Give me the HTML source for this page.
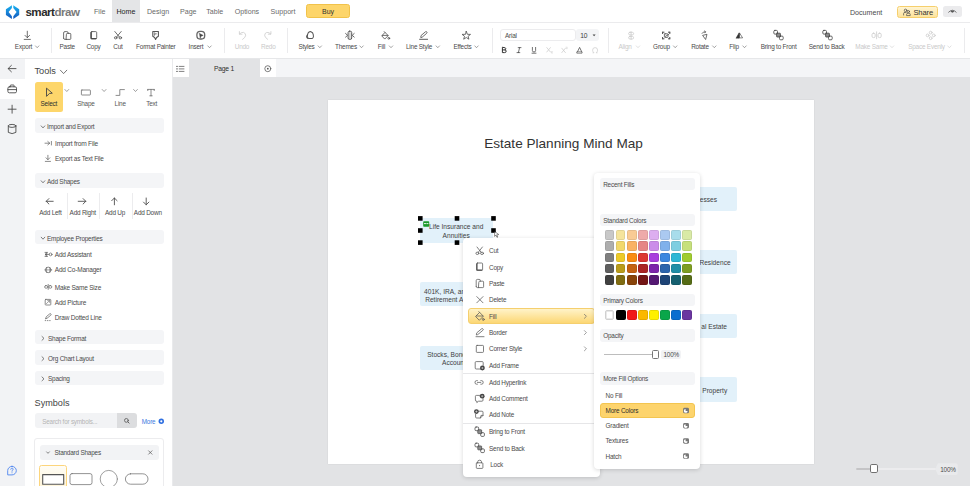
<!DOCTYPE html><html><head><meta charset="utf-8"><style>
*{box-sizing:border-box;margin:0;padding:0}
html,body{width:970px;height:486px;overflow:hidden}
body{position:relative;font-family:"Liberation Sans",sans-serif;background:#e2e3e5;color:#333}
.a{position:absolute}
.t{position:absolute;white-space:nowrap;line-height:1}
.c{position:absolute;white-space:nowrap;line-height:1;text-align:center}
svg{position:absolute;overflow:visible}
</style></head><body><div class="a" style="left:0px;top:0px;width:970px;height:23px;background:#fff;border-bottom:1px solid #ebebed"></div>
<svg style="left:0;top:0" width="970" height="486" viewBox="0 0 970 486" fill="none" stroke="#555" stroke-width="0" stroke-linecap="round" stroke-linejoin="round"><defs><linearGradient id="lg" x1="0" y1="0" x2="0" y2="1"><stop offset="0" stop-color="#19b3f2"/><stop offset="1" stop-color="#1457bd"/></linearGradient></defs><path d="M11.9 5.3 L5.9 9.2 L5.9 15 L11.9 18.9 L11.9 16.2 L8.6 12.1 L11.9 8 Z" fill="url(#lg)" stroke="none"/><path d="M13.3 5.3 L19.2 9.2 L19.2 15 L13.3 18.9 L13.3 16.2 L16.6 12.1 L13.3 8 Z" fill="url(#lg)" stroke="none"/></svg>
<div class="t" style="left:25.4px;top:6px;font-size:11.6px;letter-spacing:-0.5px;font-weight:bold"><span style="color:#2b2b2b">smart</span><span style="color:#7a7a7a">draw</span></div>
<div class="t" style="left:94px;top:9px;font-size:7.1px;letter-spacing:0px;color:#6a6a6a;font-weight:normal;">File</div>
<div class="a" style="left:112.2px;top:0px;width:28px;height:22px;background:#e4e5e7"></div>
<div class="t" style="left:116.5px;top:9px;font-size:7.1px;letter-spacing:0px;color:#222;font-weight:normal;">Home</div>
<div class="t" style="left:147px;top:9px;font-size:7.1px;letter-spacing:0px;color:#6a6a6a;font-weight:normal;">Design</div>
<div class="t" style="left:180px;top:9px;font-size:7.1px;letter-spacing:0px;color:#6a6a6a;font-weight:normal;">Page</div>
<div class="t" style="left:206.3px;top:9px;font-size:7.1px;letter-spacing:0px;color:#6a6a6a;font-weight:normal;">Table</div>
<div class="t" style="left:234.7px;top:9px;font-size:7.1px;letter-spacing:0px;color:#6a6a6a;font-weight:normal;">Options</div>
<div class="t" style="left:270.6px;top:9px;font-size:7.1px;letter-spacing:0px;color:#6a6a6a;font-weight:normal;">Support</div>
<div class="a" style="left:306px;top:4.3px;width:44.2px;height:13.5px;background:#fdd56a;border:0.7px solid #f1c24a;border-radius:2.5px"></div>
<div class="c" style="left:128.10000000000002px;width:400px;top:8px;font-size:7px;letter-spacing:0px;color:#333;font-weight:normal;">Buy</div>
<div class="t" style="left:850px;top:10px;font-size:7.1px;letter-spacing:0px;color:#4a4a4a;font-weight:normal;">Document</div>
<div class="a" style="left:897px;top:5.8px;width:40.6px;height:12px;background:linear-gradient(#fff4d2,#fde39c);border:0.8px solid #f6cf6c;border-radius:2.5px"></div>
<div class="t" style="left:913.4px;top:9px;font-size:7.6px;letter-spacing:0px;color:#333;font-weight:normal;letter-spacing:-0.1px">Share</div>
<div class="a" style="left:943px;top:6px;width:18.8px;height:10.8px;background:#ebebed;border-radius:2.5px"></div>
<svg style="left:0;top:0" width="970" height="486" viewBox="0 0 970 486" fill="none" stroke="#444" stroke-width="0.7" stroke-linecap="round" stroke-linejoin="round"><path d="M948.6 12.2 Q952.4 8 956.2 12.2"/><path d="M950.4 11.6 L952.4 10.4 L954.4 11.6 L952.4 12.8 Z" fill="#555" stroke="none"/><circle cx="905.6" cy="10.4" r="1.3"/><path d="M903.6 15 L903.6 13.6 Q903.6 12.4 905 12.4 L906.2 12.4"/><circle cx="908.4" cy="11.6" r="1.1"/><path d="M906.6 15.2 L906.6 14.4 Q906.6 13.2 908 13.2 L908.8 13.2 Q910.2 13.2 910.2 14.4 L910.2 15.2 Z"/></svg>
<div class="a" style="left:0px;top:23px;width:970px;height:36px;background:#fff;border-bottom:1px solid #e6e7e9"></div>
<div class="a" style="left:51.2px;top:28px;width:0.6px;height:25px;background:#ebebed"></div>
<div class="a" style="left:223.8px;top:28px;width:0.6px;height:25px;background:#ebebed"></div>
<div class="a" style="left:286.5px;top:28px;width:0.6px;height:25px;background:#ebebed"></div>
<div class="a" style="left:491.5px;top:28px;width:0.6px;height:25px;background:#ebebed"></div>
<div class="a" style="left:607.5px;top:28px;width:0.6px;height:25px;background:#ebebed"></div>
<div class="a" style="left:963.5px;top:28px;width:0.6px;height:25px;background:#ebebed"></div>
<div class="c" style="left:-173px;width:400px;top:44px;font-size:6.4px;letter-spacing:-0.2px;color:#4a4a4a;font-weight:normal;">Export<span style="display:inline-block;width:7px"></span></div>
<div class="c" style="left:-132.8px;width:400px;top:44px;font-size:6.4px;letter-spacing:-0.2px;color:#4a4a4a;font-weight:normal;">Paste</div>
<div class="c" style="left:-106.5px;width:400px;top:44px;font-size:6.4px;letter-spacing:-0.2px;color:#4a4a4a;font-weight:normal;">Copy</div>
<div class="c" style="left:-82px;width:400px;top:44px;font-size:6.4px;letter-spacing:-0.2px;color:#4a4a4a;font-weight:normal;">Cut</div>
<div class="c" style="left:-44.19999999999999px;width:400px;top:44px;font-size:6.4px;letter-spacing:-0.2px;color:#4a4a4a;font-weight:normal;">Format Painter</div>
<div class="c" style="left:-0.5px;width:400px;top:44px;font-size:6.4px;letter-spacing:-0.2px;color:#4a4a4a;font-weight:normal;">Insert<span style="display:inline-block;width:7px"></span></div>
<div class="c" style="left:42px;width:400px;top:44px;font-size:6.4px;letter-spacing:-0.2px;color:#c9c9c9;font-weight:normal;">Undo</div>
<div class="c" style="left:68.30000000000001px;width:400px;top:44px;font-size:6.4px;letter-spacing:-0.2px;color:#c9c9c9;font-weight:normal;">Redo</div>
<div class="c" style="left:110px;width:400px;top:44px;font-size:6.4px;letter-spacing:-0.2px;color:#4a4a4a;font-weight:normal;">Styles<span style="display:inline-block;width:7px"></span></div>
<div class="c" style="left:149.5px;width:400px;top:44px;font-size:6.4px;letter-spacing:-0.2px;color:#4a4a4a;font-weight:normal;">Themes<span style="display:inline-block;width:7px"></span></div>
<div class="c" style="left:185px;width:400px;top:44px;font-size:6.4px;letter-spacing:-0.2px;color:#4a4a4a;font-weight:normal;">Fill<span style="display:inline-block;width:7px"></span></div>
<div class="c" style="left:222.5px;width:400px;top:44px;font-size:6.4px;letter-spacing:-0.2px;color:#4a4a4a;font-weight:normal;">Line Style<span style="display:inline-block;width:7px"></span></div>
<div class="c" style="left:266px;width:400px;top:44px;font-size:6.4px;letter-spacing:-0.2px;color:#4a4a4a;font-weight:normal;">Effects<span style="display:inline-block;width:7px"></span></div>
<div class="c" style="left:428.6px;width:400px;top:44px;font-size:6.4px;letter-spacing:-0.2px;color:#c9c9c9;font-weight:normal;">Align<span style="display:inline-block;width:7px"></span></div>
<div class="c" style="left:465px;width:400px;top:44px;font-size:6.4px;letter-spacing:-0.2px;color:#4a4a4a;font-weight:normal;">Group<span style="display:inline-block;width:7px"></span></div>
<div class="c" style="left:503.5px;width:400px;top:44px;font-size:6.4px;letter-spacing:-0.2px;color:#4a4a4a;font-weight:normal;">Rotate<span style="display:inline-block;width:7px"></span></div>
<div class="c" style="left:537.5px;width:400px;top:44px;font-size:6.4px;letter-spacing:-0.2px;color:#4a4a4a;font-weight:normal;">Flip<span style="display:inline-block;width:7px"></span></div>
<div class="c" style="left:578.6px;width:400px;top:44px;font-size:6.4px;letter-spacing:-0.2px;color:#4a4a4a;font-weight:normal;">Bring to Front</div>
<div class="c" style="left:626.6px;width:400px;top:44px;font-size:6.4px;letter-spacing:-0.2px;color:#4a4a4a;font-weight:normal;">Send to Back</div>
<div class="c" style="left:675px;width:400px;top:44px;font-size:6.4px;letter-spacing:-0.2px;color:#c9c9c9;font-weight:normal;">Make Same<span style="display:inline-block;width:7px"></span></div>
<div class="c" style="left:730px;width:400px;top:44px;font-size:6.4px;letter-spacing:-0.2px;color:#c9c9c9;font-weight:normal;">Space Evenly<span style="display:inline-block;width:7px"></span></div>
<svg style="left:0;top:0" width="970" height="486" viewBox="0 0 970 486" fill="none" stroke="#555" stroke-width="0.8" stroke-linecap="round" stroke-linejoin="round"><path d="M35.5 45.9 L37.2 47.699999999999996 L38.900000000000006 45.9" stroke="#666" stroke-width="0.6"/><path d="M207.8 45.9 L209.5 47.699999999999996 L211.2 45.9" stroke="#666" stroke-width="0.6"/><path d="M318.1 45.9 L319.8 47.699999999999996 L321.5 45.9" stroke="#666" stroke-width="0.6"/><path d="M359.8 45.9 L361.5 47.699999999999996 L363.2 45.9" stroke="#666" stroke-width="0.6"/><path d="M389.3 45.9 L391 47.699999999999996 L392.7 45.9" stroke="#666" stroke-width="0.6"/><path d="M436.1 45.9 L437.8 47.699999999999996 L439.5 45.9" stroke="#666" stroke-width="0.6"/><path d="M474.8 45.9 L476.5 47.699999999999996 L478.2 45.9" stroke="#666" stroke-width="0.6"/><path d="M636.3 45.9 L638 47.699999999999996 L639.7 45.9" stroke="#ccc" stroke-width="0.6"/><path d="M673.5 45.9 L675.2 47.699999999999996 L676.9000000000001 45.9" stroke="#666" stroke-width="0.6"/><path d="M712.5999999999999 45.9 L714.3 47.699999999999996 L716.0 45.9" stroke="#666" stroke-width="0.6"/><path d="M742.8 45.9 L744.5 47.699999999999996 L746.2 45.9" stroke="#666" stroke-width="0.6"/><path d="M890.3 45.9 L892 47.699999999999996 L893.7 45.9" stroke="#ccc" stroke-width="0.6"/><path d="M947.6999999999999 45.9 L949.4 47.699999999999996 L951.1 45.9" stroke="#ccc" stroke-width="0.6"/></svg>
<svg style="left:0;top:0" width="970" height="486" viewBox="0 0 970 486" fill="none" stroke="#4a4a4a" stroke-width="0.8" stroke-linecap="round" stroke-linejoin="round"><path d="M27.3 31.2 L27.3 37.6 M25 35.4 L27.3 37.7 L29.6 35.4 M24.2 39.4 L30.4 39.4"/><path d="M63.6 38.2 L63.6 33 Q63.6 31.6 65 31.6 L66.8 31.6 Q68.2 31.6 68.2 33 L68.2 33.4 M66.4 39.4 L70 39.4 Q70.8 39.4 70.8 38.6 L70.8 34.2 Q70.8 33.4 70 33.4 L67.2 33.4 Q66.4 33.4 66.4 34.2 Z M63.6 38.2 Q63.6 39.4 64.8 39.4 L66.4 39.4"/><rect x="90.9" y="31.6" width="5.8" height="7.2" rx="1"/><path d="M91.2 32.5 L91.2 38.6 L96 38.6" stroke-width="1.3"/><path d="M114.8 31.5 L119.4 37 M121.2 31.5 L116.6 37"/><ellipse cx="115.7" cy="37.8" rx="1.3" ry="1.1"/><ellipse cx="120.3" cy="37.8" rx="1.3" ry="1.1"/><path d="M152.8 31.5 L158.4 31.5 L158.4 36.3 L156.6 37.5 L155.6 39.5 L154.6 37.5 L152.8 36.3 Z" stroke="#555" stroke-width="1.1"/><path d="M154.4 32.9 L154.4 35.6 M154.4 33 L156.6 33.8 L154.4 34.6" stroke="#666" stroke-width="0.6"/><rect x="196.9" y="31.4" width="7.8" height="7.6" rx="3.2" stroke="#666" stroke-width="1.3"/><path d="M199.5 33.4 L203.2 35.4 L201.3 35.9 L200.4 37.8 Z" fill="#444" stroke="#444" stroke-width="0.5"/><g stroke="#ccc"><path d="M239.4 31.6 L239.4 34.2 L242 34.2 M239.6 34 Q241.2 32 243.5 32.4 Q246 33.2 245.6 35.8 Q245 37.8 242.6 39.4"/><path d="M270.9 31.6 L270.9 34.2 L268.3 34.2 M270.7 34 Q269.1 32 266.8 32.4 Q264.3 33.2 264.7 35.8 Q265.3 37.8 267.7 39.4"/></g><path d="M307.2 37.9 Q306.2 36.6 307.3 35.2 L308.1 33.1 Q309.1 31.3 311 31.7 Q313.1 32.4 313.3 34.8 Q313.9 37.3 312.6 38.3 Q310 39 307.2 37.9 Z" stroke="#555" stroke-width="1.05"/><path d="M307.3 35.4 Q306.6 36.8 307.6 37.8" stroke="#555" stroke-width="1.4"/><rect x="348.1" y="31.2" width="3.6" height="8.2" rx="1.4" stroke="#555" stroke-width="1"/><path d="M349.9 31.6 L349.9 39" stroke="#777" stroke-width="0.6"/><path d="M345.6 33.5 L347.6 35.3 L345.6 37.1 M354.2 33.5 L352.2 35.3 L354.2 37.1" stroke="#555" stroke-width="0.9"/><path d="M382 35.6 L385 32.4 L388.2 35.6 L385 38.8 Z M382.4 35.4 L387.8 35.4 M385 32.4 L384.2 31.6"/><circle cx="388.8" cy="38.3" r="0.9"/><path d="M420.8 37.2 L421 35.6 L425.4 31.8 Q426.4 31.2 426.9 32 Q427.3 32.8 426.6 33.4 L422.4 37 Z"/><path d="M419.6 39.3 L427.6 39.3" stroke-width="0.9"/><path d="M466.3 31.4 L467.4 34.3 L470.5 34.4 L468.1 36.3 L468.9 39.2 L466.3 37.5 L463.7 39.2 L464.5 36.3 L462.1 34.4 L465.2 34.3 Z"/><g stroke="#ccc"><rect x="628.6" y="32.3" width="5" height="2.6" rx="1.3"/><rect x="628.6" y="36.4" width="5" height="2.6" rx="1.3"/><path d="M631.1 31.8 L631.1 39.5"/></g><path d="M662.6 32.2 L664 32.2 M662.6 32.2 L662.6 33.6 M669.8 32.2 L668.4 32.2 M669.8 32.2 L669.8 33.6 M662.6 38.8 L664 38.8 M662.6 38.8 L662.6 37.4 M669.8 38.8 L668.4 38.8 M669.8 38.8 L669.8 37.4" stroke-width="1"/><rect x="664.4" y="33.8" width="3.6" height="3.6" rx="0.6"/><path d="M665.4 36.4 L668.6 34.4"/><path d="M702 33.4 Q703 31.4 705.4 31.8 M704.6 31 L705.6 31.8 L704.8 32.8 M706.6 34.4 L702.6 35.4 L705.4 39.2 Z"/><path d="M736.2 37.9 L739.2 32.8 L739.2 37.9 Z" fill="#333" stroke="#333" stroke-width="0.6"/><path d="M739.8 33.4 L742.6 37.9 L739.8 37.9 Z" stroke="#333" stroke-width="0.6"/><rect x="773.8" y="30.4" width="3.7" height="3.7" rx="1.1" stroke-width="0.85"/><rect x="776.5999999999999" y="33.199999999999996" width="3.8" height="3.8" rx="0.5" fill="#8c8c8c" stroke-width="0.85"/><rect x="779.5" y="36.1" width="3.7" height="3.7" rx="1.1" stroke-width="0.85"/><rect x="822.8" y="30.4" width="3.7" height="3.7" rx="1.1" stroke-width="0.85"/><rect x="825.5999999999999" y="33.199999999999996" width="3.8" height="3.8" rx="0.5" fill="#8c8c8c" stroke-width="0.85"/><rect x="828.5" y="36.1" width="3.7" height="3.7" rx="1.1" stroke-width="0.85"/><g stroke="#ccc"><rect x="872" y="33.2" width="3.2" height="4.4" rx="1.4"/><rect x="878" y="33.2" width="3.2" height="4.4" rx="1.4"/><path d="M876.6 31.8 L876.6 38.8"/></g><g stroke="#ccc"><circle cx="930.7" cy="32.6" r="1.4"/><circle cx="930.7" cy="38.2" r="1.4"/><circle cx="927.6" cy="35.4" r="1.4"/><circle cx="933.8" cy="35.4" r="1.4"/></g></svg>
<div class="a" style="left:499.7px;top:28.7px;width:76px;height:12px;background:#fff;border:0.7px solid #ececee;border-radius:3px"></div>
<div class="t" style="left:505px;top:33px;font-size:6.4px;letter-spacing:-0.2px;color:#4a4a4a;font-weight:normal;">Arial</div>
<div class="a" style="left:575.6px;top:28.7px;width:23.3px;height:12px;background:#f3f4f6;border-radius:3px"></div>
<div class="t" style="left:580.3px;top:33px;font-size:6.72px;letter-spacing:-0.21px;color:#3c3c3c;font-weight:normal;">10</div>
<svg style="left:0;top:0" width="970" height="486" viewBox="0 0 970 486" fill="none" stroke="#555" stroke-width="0.75" stroke-linecap="round" stroke-linejoin="round"><path d="M592.6 34.6 L595.6 34.6 L594.1 36.2 Z" fill="#444" stroke="none"/><path d="M502.4 47.6 L502.4 52.6 L504.6 52.6 Q506.2 52.6 506.2 51.1 Q506.2 50 504.8 49.9 Q505.8 49.7 505.8 48.7 Q505.8 47.6 504.4 47.6 Z M502.4 49.9 L504.8 49.9" stroke="#333" stroke-width="1"/><path d="M518.2 47.6 L521 47.6 M517 52.6 L519.8 52.6 M519.6 47.6 L518.4 52.6" stroke="#444"/><path d="M532.4 47.4 L532.4 50.6 Q532.4 52 534 52 Q535.6 52 535.6 50.6 L535.6 47.4 M532 53.2 L536 53.2" stroke="#444"/><g stroke="#ccc"><path d="M546.8 47.6 L550.4 52 M550.4 47.6 L546.8 52"/><path d="M551.2 51.6 L552.6 51.6 L551.2 53 L552.6 53" stroke-width="0.5"/><path d="M561.8 48.2 L565.4 52.6 M565.4 48.2 L561.8 52.6"/><path d="M566 47.2 L567.4 47.2 L566 48.6 L567.4 48.6" stroke-width="0.5"/></g><path d="M577.4 52 L579.6 47.4 L581.8 52" stroke="#444"/><rect x="577.2" y="51.8" width="4.8" height="1.4" fill="#fff" stroke="#444" stroke-width="0.6"/><path d="M593 52.8 L594 52.8 Q592.6 51.6 592.6 50.2 Q592.6 47.6 595.1 47.6 Q597.6 47.6 597.6 50.2 Q597.6 51.6 596.2 52.8 L597.2 52.8" stroke="#ccc"/></svg>
<div class="a" style="left:0px;top:59px;width:25px;height:427px;background:#f2f3f5"></div>
<div class="a" style="left:0px;top:78.6px;width:25px;height:20.1px;background:#fff"></div>
<svg style="left:0;top:0" width="970" height="486" viewBox="0 0 970 486" fill="none" stroke="#4a4a4a" stroke-width="0.9" stroke-linecap="round" stroke-linejoin="round"><path d="M8.2 68.6 L16 68.6 M11.4 65.4 L8.1 68.6 L11.4 71.8"/><rect x="7.9" y="86.8" width="8.6" height="6" rx="1.4"/><path d="M10.4 86.8 L10.4 85.4 Q10.4 85 10.8 85 L13.6 85 Q14 85 14 85.4 L14 86.8 M7.9 89.6 L16.5 89.6"/><path d="M12.1 105.2 L12.1 113.2 M8.1 109.2 L16.1 109.2"/><ellipse cx="12.1" cy="125.9" rx="3.8" ry="1.5"/><path d="M8.3 125.9 L8.3 132.4 Q12.1 134.8 15.9 132.4 L15.9 125.9"/><path d="M12 466.3 A4.3 4.3 0 1 1 12 474.9 L7.7 474.9 L7.7 470.6 A4.3 4.3 0 0 1 12 466.3 Z" stroke="#4f86ef" stroke-width="0.9"/><path d="M10.7 469.3 Q10.8 468.1 12 468.1 Q13.2 468.1 13.2 469.2 Q13.2 470 12 470.6 L12 471.3" stroke="#4f86ef" stroke-width="0.8"/><circle cx="12" cy="472.8" r="0.5" fill="#4f86ef" stroke="none"/></svg>
<div class="a" style="left:25px;top:59px;width:148px;height:427px;background:#fff;border-right:1px solid #e9eaec"></div>
<div class="t" style="left:34.5px;top:67px;font-size:9.2px;letter-spacing:0px;color:#444;font-weight:normal;">Tools</div>
<div class="a" style="left:35px;top:82.2px;width:28px;height:30.3px;background:#fdd66b;border-radius:2.5px"></div>
<div class="c" style="left:-151.2px;width:400px;top:101px;font-size:6.4px;letter-spacing:-0.2px;color:#2e2e2e;font-weight:normal;">Select</div>
<div class="c" style="left:-114.1px;width:400px;top:101px;font-size:6.4px;letter-spacing:-0.2px;color:#585858;font-weight:normal;">Shape</div>
<div class="c" style="left:-79.8px;width:400px;top:101px;font-size:6.4px;letter-spacing:-0.2px;color:#585858;font-weight:normal;">Line</div>
<div class="c" style="left:-48.400000000000006px;width:400px;top:101px;font-size:6.4px;letter-spacing:-0.2px;color:#585858;font-weight:normal;">Text</div>
<svg style="left:0;top:0" width="970" height="486" viewBox="0 0 970 486" fill="none" stroke="#555" stroke-width="0.75" stroke-linecap="round" stroke-linejoin="round"><path d="M60.4 70.2 L63.6 73.60000000000001 L66.8 70.2" stroke="#555" stroke-width="0.8"/><path d="M64.89999999999999 89.5 L66.8 91.5 L68.7 89.5" stroke="#777" stroke-width="0.7"/><path d="M102.19999999999999 89.5 L104.1 91.5 L106.0 89.5" stroke="#777" stroke-width="0.7"/><path d="M133.6 89.5 L135.5 91.5 L137.4 89.5" stroke="#777" stroke-width="0.7"/><path d="M46.8 88.4 L52.3 93.2 L49.4 93.5 L46.8 96.1 Z" stroke="#444" stroke-width="0.9"/><rect x="81.4" y="90" width="9" height="5" rx="0.5" stroke="#666"/><path d="M116 95.4 L119.8 95.4 L119.8 89.6 L124.4 89.6" stroke="#666"/><path d="M147.8 89.4 L154.2 89.4 M151 89.4 L151 95.8 M147.8 89.4 L147.8 90.6 M154.2 89.4 L154.2 90.6 M149.8 95.8 L152.2 95.8" stroke="#666"/><path d="M45 143.2 L49.6 143.2 M47.8 141.5 L49.8 143.2 L47.8 144.9 M51.4 141.4 L51.4 145" stroke="#666"/><path d="M47.9 155.3 L47.9 159.6 M46 157.8 L47.9 159.7 L49.8 157.8 M45.3 161.4 L50.5 161.4" stroke="#666"/><path d="M46.2 201.3 L53.2 201.3 M48.9 198.6 L46.2 201.3 L48.9 204" stroke="#444" stroke-width="0.85"/><path d="M78.2 201.3 L85.8 201.3 M83.1 198.6 L85.8 201.3 L83.1 204" stroke="#444" stroke-width="0.85"/><path d="M114.4 198 L114.4 204.8 M111.7 200.7 L114.4 198 L117.1 200.7" stroke="#444" stroke-width="0.85"/><path d="M146.2 198 L146.2 204.8 M143.5 202.1 L146.2 204.8 L148.9 202.1" stroke="#444" stroke-width="0.85"/><path d="M45 252.4 L47.6 252.4 M45 256.4 L47.6 256.4 M46.3 252.4 L46.3 256.4 M47.8 254.4 L49.2 254.4" stroke="#666"/><circle cx="50.6" cy="254.4" r="1.4" stroke="#666"/><rect x="45" y="253.6" width="2.6" height="1.6" fill="#666" stroke="none"/><circle cx="48.2" cy="269.9" r="2.8" stroke="#666"/><path d="M44.6 269.9 L51.8 269.9 M46.6 267.4 L46.6 272.4 M49.8 267.4 L49.8 272.4" stroke="#666" stroke-width="0.6"/><rect x="44.6" y="285.6" width="3" height="2.6" rx="1.3" stroke="#666"/><rect x="48.8" y="285.6" width="3" height="2.6" rx="1.3" stroke="#666"/><path d="M48.2 284.4 L48.2 289.4" stroke="#666"/><rect x="45.2" y="299.4" width="5.6" height="5.6" rx="0.6" stroke="#666"/><path d="M46.4 303.6 L49.6 300.6 M47.6 300.6 L49.6 300.6 L49.6 302.4" stroke="#666" stroke-width="0.6"/><path d="M45.6 318.6 L46.4 316.6 L49.8 313.8 Q50.6 313.4 51 314 Q51.4 314.6 50.8 315.2 L47.4 318 Z" stroke="#666"/><path d="M45.2 320.6 L45.8 320.6 M47.4 320.6 L48 320.6 M49.6 320.6 L50.2 320.6" stroke="#666"/></svg>
<div class="a" style="left:35px;top:118.3px;width:128.6px;height:14.600000000000009px;background:#f4f5f7;border-radius:3px"></div>
<svg style="left:0;top:0" width="970" height="486" viewBox="0 0 970 486" fill="none" stroke="#555" stroke-width="0.8" stroke-linecap="round" stroke-linejoin="round"><path d="M41.2 125.89999999999999 L43 127.89999999999999 L44.8 125.89999999999999" stroke="#555" stroke-width="0.75"/></svg>
<div class="t" style="left:47px;top:124px;font-size:6.4px;letter-spacing:-0.2px;color:#4a4a4a;font-weight:normal;">Import and Export</div>
<div class="t" style="left:55px;top:141px;font-size:6.62px;letter-spacing:-0.21px;color:#4a4a4a;font-weight:normal;">Import from File</div>
<div class="t" style="left:55px;top:156px;font-size:6.4px;letter-spacing:-0.2px;color:#4a4a4a;font-weight:normal;">Export as Text File</div>
<div class="a" style="left:35px;top:173.2px;width:128.6px;height:14.600000000000023px;background:#f4f5f7;border-radius:3px"></div>
<svg style="left:0;top:0" width="970" height="486" viewBox="0 0 970 486" fill="none" stroke="#555" stroke-width="0.8" stroke-linecap="round" stroke-linejoin="round"><path d="M41.2 180.8 L43 182.8 L44.8 180.8" stroke="#555" stroke-width="0.75"/></svg>
<div class="t" style="left:47px;top:179px;font-size:6.4px;letter-spacing:-0.2px;color:#4a4a4a;font-weight:normal;">Add Shapes</div>
<div class="c" style="left:-149.6px;width:400px;top:210px;font-size:6.4px;letter-spacing:-0.2px;color:#4a4a4a;font-weight:normal;">Add Left</div>
<div class="c" style="left:-117.3px;width:400px;top:210px;font-size:6.4px;letter-spacing:-0.2px;color:#4a4a4a;font-weight:normal;">Add Right</div>
<div class="c" style="left:-84.95px;width:400px;top:210px;font-size:6.4px;letter-spacing:-0.2px;color:#4a4a4a;font-weight:normal;">Add Up</div>
<div class="c" style="left:-52.19999999999999px;width:400px;top:210px;font-size:6.4px;letter-spacing:-0.2px;color:#4a4a4a;font-weight:normal;">Add Down</div>
<div class="a" style="left:66.6px;top:193px;width:0.6px;height:26.3px;background:#ececee"></div>
<div class="a" style="left:98.6px;top:193px;width:0.6px;height:26.3px;background:#ececee"></div>
<div class="a" style="left:131.6px;top:193px;width:0.6px;height:26.3px;background:#ececee"></div>
<div class="a" style="left:35px;top:229.5px;width:128.6px;height:14.800000000000011px;background:#f4f5f7;border-radius:3px"></div>
<svg style="left:0;top:0" width="970" height="486" viewBox="0 0 970 486" fill="none" stroke="#555" stroke-width="0.8" stroke-linecap="round" stroke-linejoin="round"><path d="M41.2 237.20000000000002 L43 239.20000000000002 L44.8 237.20000000000002" stroke="#555" stroke-width="0.75"/></svg>
<div class="t" style="left:47px;top:236px;font-size:6.4px;letter-spacing:-0.2px;color:#4a4a4a;font-weight:normal;">Employee Properties</div>
<div class="t" style="left:54.8px;top:252px;font-size:6.51px;letter-spacing:-0.205px;color:#4a4a4a;font-weight:normal;">Add Assistant</div>
<div class="t" style="left:54.8px;top:267px;font-size:6.51px;letter-spacing:-0.205px;color:#4a4a4a;font-weight:normal;">Add Co-Manager</div>
<div class="t" style="left:54.8px;top:285px;font-size:6.51px;letter-spacing:-0.205px;color:#4a4a4a;font-weight:normal;">Make Same Size</div>
<div class="t" style="left:54.8px;top:300px;font-size:6.51px;letter-spacing:-0.205px;color:#4a4a4a;font-weight:normal;">Add Picture</div>
<div class="t" style="left:54.8px;top:315px;font-size:6.51px;letter-spacing:-0.205px;color:#4a4a4a;font-weight:normal;">Draw Dotted Line</div>
<div class="a" style="left:35px;top:330.06px;width:128.6px;height:14.240000000000009px;background:#f4f5f7;border-radius:3px"></div>
<svg style="left:0;top:0" width="970" height="486" viewBox="0 0 970 486" fill="none" stroke="#555" stroke-width="0.8" stroke-linecap="round" stroke-linejoin="round"><path d="M42.0 336.48 L44.0 338.38 L42.0 340.28" stroke="#555" stroke-width="0.75"/></svg>
<div class="t" style="left:48px;top:336px;font-size:6.4px;letter-spacing:-0.2px;color:#4a4a4a;font-weight:normal;">Shape Format</div>
<div class="a" style="left:35px;top:350.3px;width:128.6px;height:14.300000000000011px;background:#f4f5f7;border-radius:3px"></div>
<svg style="left:0;top:0" width="970" height="486" viewBox="0 0 970 486" fill="none" stroke="#555" stroke-width="0.8" stroke-linecap="round" stroke-linejoin="round"><path d="M42.0 356.75000000000006 L44.0 358.65000000000003 L42.0 360.55" stroke="#555" stroke-width="0.75"/></svg>
<div class="t" style="left:48px;top:356px;font-size:6.4px;letter-spacing:-0.2px;color:#4a4a4a;font-weight:normal;">Org Chart Layout</div>
<div class="a" style="left:35px;top:370.5px;width:128.6px;height:14.300000000000011px;background:#f4f5f7;border-radius:3px"></div>
<svg style="left:0;top:0" width="970" height="486" viewBox="0 0 970 486" fill="none" stroke="#555" stroke-width="0.8" stroke-linecap="round" stroke-linejoin="round"><path d="M42.0 376.95 L44.0 378.84999999999997 L42.0 380.74999999999994" stroke="#555" stroke-width="0.75"/></svg>
<div class="t" style="left:48px;top:376px;font-size:6.4px;letter-spacing:-0.2px;color:#4a4a4a;font-weight:normal;">Spacing</div>
<div class="t" style="left:34.6px;top:399px;font-size:9.1px;letter-spacing:0px;color:#444;font-weight:normal;">Symbols</div>
<div class="a" style="left:35px;top:413.4px;width:81.6px;height:14.4px;background:#f2f3f5;border-radius:3px 0 0 3px"></div>
<div class="t" style="left:42.3px;top:419px;font-size:6.3px;letter-spacing:-0.2px;color:#b4b4b4;font-weight:normal;">Search for symbols...</div>
<div class="a" style="left:116.6px;top:413.4px;width:20.5px;height:14.4px;background:#dcdddf;border-radius:0 3px 3px 0"></div>
<div class="t" style="left:141.8px;top:419px;font-size:6.3px;letter-spacing:-0.2px;color:#3b78e0;font-weight:normal;">More</div>
<svg style="left:0;top:0" width="970" height="486" viewBox="0 0 970 486" fill="none" stroke="#555" stroke-width="0.8" stroke-linecap="round" stroke-linejoin="round"><circle cx="126.4" cy="420.4" r="1.9" stroke="#555" stroke-width="0.8"/><path d="M127.8 421.8 L129.1 423.1" stroke="#555" stroke-width="0.9"/><circle cx="161.3" cy="421.3" r="2.7" fill="#2f6fe0" stroke="none"/><circle cx="161.3" cy="421.3" r="1.1" fill="#fff" stroke="none"/></svg>
<div class="a" style="left:34.3px;top:438.4px;width:129.3px;height:60px;background:#fff;border:0.6px solid #ececee;border-radius:3px"></div>
<div class="a" style="left:39.5px;top:444.9px;width:119.3px;height:15.1px;background:#f2f3f5;border-radius:3px"></div>
<div class="t" style="left:54.5px;top:450px;font-size:6.4px;letter-spacing:-0.2px;color:#4a4a4a;font-weight:normal;">Standard Shapes</div>
<div class="a" style="left:39.2px;top:465.2px;width:27.9px;height:30px;background:linear-gradient(#fffdf6,#fdf1cf);border:1px solid #fcd57c;border-radius:2.5px"></div>
<svg style="left:0;top:0" width="970" height="486" viewBox="0 0 970 486" fill="none" stroke="#555" stroke-width="0.7" stroke-linecap="round" stroke-linejoin="round"><path d="M46.6 451.85 L48 453.35 L49.4 451.85" stroke="#555" stroke-width="0.7"/><path d="M148.6 450.8 L152 454.2 M152 450.8 L148.6 454.2" stroke="#555" stroke-width="0.7"/><rect x="42.7" y="474.6" width="21" height="9.6" fill="#fff" stroke="#555" stroke-width="1.1"/><rect x="70" y="473.6" width="22" height="11" rx="2" stroke="#666"/><circle cx="108.8" cy="479" r="8.6" stroke="#777"/><rect x="125.4" y="473.8" width="22.6" height="10.4" rx="5.2" stroke="#666"/></svg>
<div class="a" style="left:173px;top:59px;width:797px;height:18.4px;background:#f4f5f7"></div>
<div class="a" style="left:173px;top:59px;width:16px;height:18.4px;background:#fff"></div>
<div class="a" style="left:189px;top:59px;width:70.5px;height:18.4px;background:#e2e3e5"></div>
<div class="c" style="left:24px;width:400px;top:66px;font-size:6.72px;letter-spacing:-0.21px;color:#2e2e2e;font-weight:normal;">Page 1</div>
<div class="a" style="left:259.5px;top:59px;width:16.5px;height:18.4px;background:#fff"></div>
<svg style="left:0;top:0" width="970" height="486" viewBox="0 0 970 486" fill="none" stroke="#555" stroke-width="0.8" stroke-linecap="round" stroke-linejoin="round"><path d="M179.2 66.4 L184 66.4 M179.2 68.9 L184 68.9 M179.2 71.4 L184 71.4 M176.4 66.4 L177.6 66.4 M176.4 68.9 L177.6 68.9 M176.4 71.4 L177.6 71.4" stroke="#555" stroke-width="0.75"/><circle cx="267.8" cy="68.7" r="3" stroke="#555" stroke-width="0.75"/><circle cx="267.8" cy="68.7" r="0.9" fill="#555" stroke="none"/></svg>
<div class="a" style="left:328.2px;top:99.5px;width:485.9px;height:364.4px;background:#fff;box-shadow:0 0 1.5px rgba(0,0,0,0.10)"></div>
<div class="c" style="left:363.5px;width:400px;top:137px;font-size:13.6px;letter-spacing:0px;color:#333;font-weight:normal;">Estate Planning Mind Map</div>
<div class="a" style="left:420.3px;top:218.4px;width:73.19999999999999px;height:24.19999999999999px;background:#e2f1fa;border-radius:2px"></div>
<div class="c" style="left:256.2px;width:400px;top:224px;font-size:6.6px;letter-spacing:0px;color:#3e3e3e;font-weight:normal;">Life Insurance and</div>
<div class="c" style="left:256.2px;width:400px;top:233px;font-size:6.6px;letter-spacing:0px;color:#3e3e3e;font-weight:normal;">Annuities</div>
<div class="a" style="left:420.3px;top:282.2px;width:73.19999999999999px;height:24.19999999999999px;background:#e2f1fa;border-radius:2px"></div>
<div class="c" style="left:255.60000000000002px;width:400px;top:289px;font-size:6.6px;letter-spacing:0px;color:#3e3e3e;font-weight:normal;">401K, IRA, and Other</div>
<div class="c" style="left:255.60000000000002px;width:400px;top:297px;font-size:6.6px;letter-spacing:0px;color:#3e3e3e;font-weight:normal;">Retirement Accounts</div>
<div class="a" style="left:420.3px;top:346px;width:73.19999999999999px;height:24.19999999999999px;background:#e2f1fa;border-radius:2px"></div>
<div class="c" style="left:255.60000000000002px;width:400px;top:352px;font-size:6.6px;letter-spacing:0px;color:#3e3e3e;font-weight:normal;">Stocks, Bonds, and</div>
<div class="c" style="left:255.60000000000002px;width:400px;top:360px;font-size:6.6px;letter-spacing:0px;color:#3e3e3e;font-weight:normal;">Accounts</div>
<div class="a" style="left:663.8px;top:186.6px;width:73.20000000000005px;height:24.19999999999999px;background:#e2f1fa;border-radius:2px"></div>
<div class="t" style="left:597px;width:120px;text-align:right;top:197px;font-size:6.6px;color:#3e3e3e">Businesses</div>
<div class="a" style="left:663.8px;top:250.2px;width:73.20000000000005px;height:24.19999999999999px;background:#e2f1fa;border-radius:2px"></div>
<div class="t" style="left:610.6px;width:120px;text-align:right;top:260px;font-size:6.6px;color:#3e3e3e">Primary Residence</div>
<div class="a" style="left:663.8px;top:314px;width:73.20000000000005px;height:24.19999999999999px;background:#e2f1fa;border-radius:2px"></div>
<div class="t" style="left:607px;width:120px;text-align:right;top:324px;font-size:6.6px;color:#3e3e3e">al Estate</div>
<div class="a" style="left:663.8px;top:377.4px;width:73.20000000000005px;height:24.19999999999999px;background:#e2f1fa;border-radius:2px"></div>
<div class="t" style="left:607.2px;width:120px;text-align:right;top:388px;font-size:6.6px;color:#3e3e3e">Property</div>
<svg style="left:0;top:0" width="970" height="486" viewBox="0 0 970 486" fill="none" stroke="#555" stroke-width="0.8" stroke-linecap="round" stroke-linejoin="round"><rect x="418.0" y="216.1" width="4.6" height="4.6" fill="#000" stroke="none"/><rect x="454.7" y="216.1" width="4.6" height="4.6" fill="#000" stroke="none"/><rect x="491.2" y="216.1" width="4.6" height="4.6" fill="#000" stroke="none"/><rect x="418.0" y="228.2" width="4.6" height="4.6" fill="#000" stroke="none"/><rect x="491.2" y="228.2" width="4.6" height="4.6" fill="#000" stroke="none"/><rect x="418.0" y="240.29999999999998" width="4.6" height="4.6" fill="#000" stroke="none"/><rect x="454.7" y="240.29999999999998" width="4.6" height="4.6" fill="#000" stroke="none"/><rect x="491.2" y="240.29999999999998" width="4.6" height="4.6" fill="#000" stroke="none"/><rect x="423.2" y="221.2" width="6" height="5.6" rx="0.8" fill="#1a9a2a" stroke="none"/><path d="M424.4 223.6 L425.6 223.6 M426.8 223.6 L428 223.6" stroke="#fff" stroke-width="0.9"/><path d="M494.6 231.8 L494.6 236.4 L495.8 235.2 L497 237.4 L497.8 237 L496.7 234.8 L498.4 234.6 Z" fill="#fff" stroke="#222" stroke-width="0.5"/></svg>
<div class="a" style="left:463.2px;top:238.2px;width:136.6px;height:238.4px;background:#fff;border-radius:4px;box-shadow:0 1px 4px rgba(0,0,0,0.16)"></div>
<div class="a" style="left:468.4px;top:308px;width:126.2px;height:16.4px;background:linear-gradient(#fff3c9,#fcd774);border:0.6px solid #f5cf6e;border-radius:3px"></div>
<div class="t" style="left:489px;top:248px;font-size:6.4px;letter-spacing:-0.2px;color:#4a4a4a;font-weight:normal;">Cut</div>
<div class="t" style="left:489px;top:265px;font-size:6.4px;letter-spacing:-0.2px;color:#4a4a4a;font-weight:normal;">Copy</div>
<div class="t" style="left:489px;top:281px;font-size:6.4px;letter-spacing:-0.2px;color:#4a4a4a;font-weight:normal;">Paste</div>
<div class="t" style="left:489px;top:297px;font-size:6.4px;letter-spacing:-0.2px;color:#4a4a4a;font-weight:normal;">Delete</div>
<div class="t" style="left:489px;top:314px;font-size:6.4px;letter-spacing:-0.2px;color:#4a4a4a;font-weight:normal;">Fill</div>
<div class="t" style="left:489px;top:330px;font-size:6.4px;letter-spacing:-0.2px;color:#4a4a4a;font-weight:normal;">Border</div>
<div class="t" style="left:489px;top:346px;font-size:6.4px;letter-spacing:-0.2px;color:#4a4a4a;font-weight:normal;">Corner Style</div>
<div class="t" style="left:489px;top:363px;font-size:6.4px;letter-spacing:-0.2px;color:#4a4a4a;font-weight:normal;">Add Frame</div>
<div class="t" style="left:489px;top:380px;font-size:6.4px;letter-spacing:-0.2px;color:#4a4a4a;font-weight:normal;">Add Hyperlink</div>
<div class="t" style="left:489px;top:396px;font-size:6.4px;letter-spacing:-0.2px;color:#4a4a4a;font-weight:normal;">Add Comment</div>
<div class="t" style="left:489px;top:412px;font-size:6.4px;letter-spacing:-0.2px;color:#4a4a4a;font-weight:normal;">Add Note</div>
<div class="t" style="left:489px;top:429px;font-size:6.4px;letter-spacing:-0.2px;color:#4a4a4a;font-weight:normal;">Bring to Front</div>
<div class="t" style="left:489px;top:446px;font-size:6.4px;letter-spacing:-0.2px;color:#4a4a4a;font-weight:normal;">Send to Back</div>
<div class="t" style="left:490.2px;top:462px;font-size:6.4px;letter-spacing:-0.2px;color:#4a4a4a;font-weight:normal;">Lock</div>
<div class="a" style="left:463px;top:373.3px;width:137px;height:0.6px;background:#e6e6e8"></div>
<div class="a" style="left:463px;top:422.5px;width:137px;height:0.6px;background:#e6e6e8"></div>
<svg style="left:0;top:0" width="970" height="486" viewBox="0 0 970 486" fill="none" stroke="#555" stroke-width="0.75" stroke-linecap="round" stroke-linejoin="round"><path d="M477 247 L481.2 252.4 M482.4 247 L478.2 252.4"/><ellipse cx="477.4" cy="253.3" rx="1.5" ry="1.2"/><ellipse cx="482" cy="253.3" rx="1.5" ry="1.2"/><rect x="476.6" y="263" width="6" height="7.4" rx="1"/><path d="M476.9 264 L476.9 270.1 L481.8 270.1" stroke-width="1.3"/><path d="M476.2 286.6 L476.2 280.6 Q476.2 279.4 477.4 279.4 L479.2 279.4 Q480.4 279.4 480.4 280.6 L480.4 281.2 M478.8 287.6 L482.8 287.6 Q483.6 287.6 483.6 286.8 L483.6 282 Q483.6 281.2 482.8 281.2 L479.6 281.2 Q478.8 281.2 478.8 282 Z M476.2 286.6 Q476.2 287.6 477.4 287.6 L478.8 287.6"/><path d="M476.8 296.6 L483 302.8 M483 296.6 L476.8 302.8"/><path d="M475.8 316.2 L479.6 312.4 L483.4 316.2 L479.6 320 Z M476.4 316 L482.8 316 M479.6 312.4 L478.8 311.6"/><circle cx="483.3" cy="319.4" r="1"/><path d="M476.4 334.6 L476.8 332.8 L481.6 328.8 Q482.6 328.2 483.1 329 Q483.6 329.8 482.8 330.4 L478 334.4 Z M476 336.7 L484 336.7"/><rect x="476.3" y="345.4" width="7.2" height="7" rx="0.8"/><path d="M481 369 L476.2 369 Q475.2 369 475.2 368 L475.2 362.6 Q475.2 361.6 476.2 361.6 L482.2 361.6 Q483.2 361.6 483.2 362.6 L483.2 365.4"/><circle cx="482.4" cy="368" r="2.4" fill="#444" stroke="none"/><path d="M481.7 368 L483.1 368 M482.4 367.3 L482.4 368.7" stroke="#fff" stroke-width="0.45"/><path d="M477.4 380.6 L476.6 380.6 Q475 380.6 475 382.4 Q475 384.2 476.6 384.2 L477.4 384.2 M480.8 380.6 L481.6 380.6 Q483.2 380.6 483.2 382.4 Q483.2 384.2 481.6 384.2 L480.8 384.2 M477.4 382.4 L480.8 382.4"/><path d="M480.2 395.4 L476.4 395.4 Q475.4 395.4 475.4 396.4 L475.4 400.2 Q475.4 401.2 476.4 401.2 L477 401.2 L476.8 402.6 L478.6 401.2 L482 401.2 Q483 401.2 483 400.2 L483 398.6"/><circle cx="482.2" cy="396.2" r="2.4" fill="#444" stroke="none"/><path d="M481.5 396.2 L482.9 396.2 M482.2 395.5 L482.2 396.9" stroke="#fff" stroke-width="0.45"/><path d="M478.6 411.2 L482 411.2 Q483 411.2 483 412.2 L483 415.4 L480.4 418 L476.6 418 Q475.6 418 475.6 417 L475.6 414.4 M483 415.4 L481 415.4 L480.4 418"/><circle cx="476.4" cy="411.6" r="2.4" fill="#444" stroke="none"/><path d="M475.6 411.6 L477.2 411.6 M476.4 410.8 L476.4 412.4" stroke="#fff" stroke-width="0.5"/><rect x="475" y="427" width="3.7" height="3.7" rx="1.1" stroke-width="0.85"/><rect x="477.8" y="429.8" width="3.8" height="3.8" rx="0.5" fill="#8c8c8c" stroke-width="0.85"/><rect x="480.7" y="432.7" width="3.7" height="3.7" rx="1.1" stroke-width="0.85"/><rect x="475" y="443.2" width="3.7" height="3.7" rx="1.1" stroke-width="0.85"/><rect x="477.8" y="446.0" width="3.8" height="3.8" rx="0.5" fill="#8c8c8c" stroke-width="0.85"/><rect x="480.7" y="448.9" width="3.7" height="3.7" rx="1.1" stroke-width="0.85"/><rect x="476.3" y="462.8" width="6.6" height="5.6" rx="0.8"/><path d="M477.7 462.8 L477.7 461.8 Q477.7 460.2 479.6 460.2 Q481.5 460.2 481.5 461.8 L481.5 462.8"/><circle cx="479.6" cy="465.6" r="0.55" fill="#555" stroke="none"/><path d="M584.4 314.3 L586.4 316.3 L584.4 318.3" stroke="#666" stroke-width="0.7"/><path d="M584.4 330.6 L586.4 332.6 L584.4 334.6" stroke="#777" stroke-width="0.7"/><path d="M584.4 346.8 L586.4 348.8 L584.4 350.8" stroke="#777" stroke-width="0.7"/></svg>
<div class="a" style="left:594.4px;top:172.6px;width:105.9px;height:296px;background:#fff;border-radius:4px;box-shadow:0 1px 4px rgba(0,0,0,0.16)"></div>
<div class="a" style="left:600.1px;top:178.3px;width:95.3px;height:12.199999999999989px;background:#f4f5f7;border-radius:3px"></div>
<div class="t" style="left:603.2px;top:182px;font-size:6.4px;letter-spacing:-0.2px;color:#4a4a4a;font-weight:normal;">Recent Fills</div>
<div class="a" style="left:600.1px;top:214.4px;width:95.3px;height:11.599999999999994px;background:#f4f5f7;border-radius:3px"></div>
<div class="t" style="left:603.2px;top:218px;font-size:6.4px;letter-spacing:-0.2px;color:#4a4a4a;font-weight:normal;">Standard Colors</div>
<div class="a" style="left:604.5px;top:230.1px;width:9.8px;height:9.8px;background:#c8c8c8;border-radius:2px;box-shadow:inset 0 0 0 0.7px rgba(0,0,0,0.10)"></div>
<div class="a" style="left:615.62px;top:230.1px;width:9.8px;height:9.8px;background:#f5e49c;border-radius:2px;box-shadow:inset 0 0 0 0.7px rgba(0,0,0,0.10)"></div>
<div class="a" style="left:626.74px;top:230.1px;width:9.8px;height:9.8px;background:#f9cb94;border-radius:2px;box-shadow:inset 0 0 0 0.7px rgba(0,0,0,0.10)"></div>
<div class="a" style="left:637.86px;top:230.1px;width:9.8px;height:9.8px;background:#eeaaaa;border-radius:2px;box-shadow:inset 0 0 0 0.7px rgba(0,0,0,0.10)"></div>
<div class="a" style="left:648.98px;top:230.1px;width:9.8px;height:9.8px;background:#ddaef0;border-radius:2px;box-shadow:inset 0 0 0 0.7px rgba(0,0,0,0.10)"></div>
<div class="a" style="left:660.1px;top:230.1px;width:9.8px;height:9.8px;background:#abc9f1;border-radius:2px;box-shadow:inset 0 0 0 0.7px rgba(0,0,0,0.10)"></div>
<div class="a" style="left:671.22px;top:230.1px;width:9.8px;height:9.8px;background:#a8ddeb;border-radius:2px;box-shadow:inset 0 0 0 0.7px rgba(0,0,0,0.10)"></div>
<div class="a" style="left:682.34px;top:230.1px;width:9.8px;height:9.8px;background:#d9eaa6;border-radius:2px;box-shadow:inset 0 0 0 0.7px rgba(0,0,0,0.10)"></div>
<div class="a" style="left:604.5px;top:241.29999999999998px;width:9.8px;height:9.8px;background:#aeaeae;border-radius:2px;box-shadow:inset 0 0 0 0.7px rgba(0,0,0,0.10)"></div>
<div class="a" style="left:615.62px;top:241.29999999999998px;width:9.8px;height:9.8px;background:#f2d86c;border-radius:2px;box-shadow:inset 0 0 0 0.7px rgba(0,0,0,0.10)"></div>
<div class="a" style="left:626.74px;top:241.29999999999998px;width:9.8px;height:9.8px;background:#f9b264;border-radius:2px;box-shadow:inset 0 0 0 0.7px rgba(0,0,0,0.10)"></div>
<div class="a" style="left:637.86px;top:241.29999999999998px;width:9.8px;height:9.8px;background:#e68686;border-radius:2px;box-shadow:inset 0 0 0 0.7px rgba(0,0,0,0.10)"></div>
<div class="a" style="left:648.98px;top:241.29999999999998px;width:9.8px;height:9.8px;background:#cb8de9;border-radius:2px;box-shadow:inset 0 0 0 0.7px rgba(0,0,0,0.10)"></div>
<div class="a" style="left:660.1px;top:241.29999999999998px;width:9.8px;height:9.8px;background:#80b1eb;border-radius:2px;box-shadow:inset 0 0 0 0.7px rgba(0,0,0,0.10)"></div>
<div class="a" style="left:671.22px;top:241.29999999999998px;width:9.8px;height:9.8px;background:#7ecee1;border-radius:2px;box-shadow:inset 0 0 0 0.7px rgba(0,0,0,0.10)"></div>
<div class="a" style="left:682.34px;top:241.29999999999998px;width:9.8px;height:9.8px;background:#c6e07c;border-radius:2px;box-shadow:inset 0 0 0 0.7px rgba(0,0,0,0.10)"></div>
<div class="a" style="left:604.5px;top:252.5px;width:9.8px;height:9.8px;background:#808080;border-radius:2px;box-shadow:inset 0 0 0 0.7px rgba(0,0,0,0.10)"></div>
<div class="a" style="left:615.62px;top:252.5px;width:9.8px;height:9.8px;background:#edca28;border-radius:2px;box-shadow:inset 0 0 0 0.7px rgba(0,0,0,0.10)"></div>
<div class="a" style="left:626.74px;top:252.5px;width:9.8px;height:9.8px;background:#f98c12;border-radius:2px;box-shadow:inset 0 0 0 0.7px rgba(0,0,0,0.10)"></div>
<div class="a" style="left:637.86px;top:252.5px;width:9.8px;height:9.8px;background:#db3732;border-radius:2px;box-shadow:inset 0 0 0 0.7px rgba(0,0,0,0.10)"></div>
<div class="a" style="left:648.98px;top:252.5px;width:9.8px;height:9.8px;background:#a83fdd;border-radius:2px;box-shadow:inset 0 0 0 0.7px rgba(0,0,0,0.10)"></div>
<div class="a" style="left:660.1px;top:252.5px;width:9.8px;height:9.8px;background:#3c87df;border-radius:2px;box-shadow:inset 0 0 0 0.7px rgba(0,0,0,0.10)"></div>
<div class="a" style="left:671.22px;top:252.5px;width:9.8px;height:9.8px;background:#2eb7d5;border-radius:2px;box-shadow:inset 0 0 0 0.7px rgba(0,0,0,0.10)"></div>
<div class="a" style="left:682.34px;top:252.5px;width:9.8px;height:9.8px;background:#a0cc30;border-radius:2px;box-shadow:inset 0 0 0 0.7px rgba(0,0,0,0.10)"></div>
<div class="a" style="left:604.5px;top:263.7px;width:9.8px;height:9.8px;background:#606060;border-radius:2px;box-shadow:inset 0 0 0 0.7px rgba(0,0,0,0.10)"></div>
<div class="a" style="left:615.62px;top:263.7px;width:9.8px;height:9.8px;background:#ba9c1c;border-radius:2px;box-shadow:inset 0 0 0 0.7px rgba(0,0,0,0.10)"></div>
<div class="a" style="left:626.74px;top:263.7px;width:9.8px;height:9.8px;background:#c46212;border-radius:2px;box-shadow:inset 0 0 0 0.7px rgba(0,0,0,0.10)"></div>
<div class="a" style="left:637.86px;top:263.7px;width:9.8px;height:9.8px;background:#aa2424;border-radius:2px;box-shadow:inset 0 0 0 0.7px rgba(0,0,0,0.10)"></div>
<div class="a" style="left:648.98px;top:263.7px;width:9.8px;height:9.8px;background:#7c24aa;border-radius:2px;box-shadow:inset 0 0 0 0.7px rgba(0,0,0,0.10)"></div>
<div class="a" style="left:660.1px;top:263.7px;width:9.8px;height:9.8px;background:#2c64ac;border-radius:2px;box-shadow:inset 0 0 0 0.7px rgba(0,0,0,0.10)"></div>
<div class="a" style="left:671.22px;top:263.7px;width:9.8px;height:9.8px;background:#208ea6;border-radius:2px;box-shadow:inset 0 0 0 0.7px rgba(0,0,0,0.10)"></div>
<div class="a" style="left:682.34px;top:263.7px;width:9.8px;height:9.8px;background:#7e9e22;border-radius:2px;box-shadow:inset 0 0 0 0.7px rgba(0,0,0,0.10)"></div>
<div class="a" style="left:604.5px;top:274.9px;width:9.8px;height:9.8px;background:#404040;border-radius:2px;box-shadow:inset 0 0 0 0.7px rgba(0,0,0,0.10)"></div>
<div class="a" style="left:615.62px;top:274.9px;width:9.8px;height:9.8px;background:#806c12;border-radius:2px;box-shadow:inset 0 0 0 0.7px rgba(0,0,0,0.10)"></div>
<div class="a" style="left:626.74px;top:274.9px;width:9.8px;height:9.8px;background:#88440a;border-radius:2px;box-shadow:inset 0 0 0 0.7px rgba(0,0,0,0.10)"></div>
<div class="a" style="left:637.86px;top:274.9px;width:9.8px;height:9.8px;background:#741616;border-radius:2px;box-shadow:inset 0 0 0 0.7px rgba(0,0,0,0.10)"></div>
<div class="a" style="left:648.98px;top:274.9px;width:9.8px;height:9.8px;background:#541872;border-radius:2px;box-shadow:inset 0 0 0 0.7px rgba(0,0,0,0.10)"></div>
<div class="a" style="left:660.1px;top:274.9px;width:9.8px;height:9.8px;background:#1e4476;border-radius:2px;box-shadow:inset 0 0 0 0.7px rgba(0,0,0,0.10)"></div>
<div class="a" style="left:671.22px;top:274.9px;width:9.8px;height:9.8px;background:#166070;border-radius:2px;box-shadow:inset 0 0 0 0.7px rgba(0,0,0,0.10)"></div>
<div class="a" style="left:682.34px;top:274.9px;width:9.8px;height:9.8px;background:#566c16;border-radius:2px;box-shadow:inset 0 0 0 0.7px rgba(0,0,0,0.10)"></div>
<div class="a" style="left:600.1px;top:294.4px;width:95.3px;height:11.600000000000023px;background:#f4f5f7;border-radius:3px"></div>
<div class="t" style="left:603.2px;top:298px;font-size:6.4px;letter-spacing:-0.2px;color:#4a4a4a;font-weight:normal;">Primary Colors</div>
<div class="a" style="left:604.5px;top:310.4px;width:9.9px;height:10px;background:#ffffff;border-radius:2px;box-shadow:inset 0 0 0 0.7px rgba(0,0,0,0.12);border:0.6px solid #d0d0d0"></div>
<div class="a" style="left:615.62px;top:310.4px;width:9.9px;height:10px;background:#000000;border-radius:2px;box-shadow:inset 0 0 0 0.7px rgba(0,0,0,0.12)"></div>
<div class="a" style="left:626.74px;top:310.4px;width:9.9px;height:10px;background:#f01818;border-radius:2px;box-shadow:inset 0 0 0 0.7px rgba(0,0,0,0.12)"></div>
<div class="a" style="left:637.86px;top:310.4px;width:9.9px;height:10px;background:#fbb800;border-radius:2px;box-shadow:inset 0 0 0 0.7px rgba(0,0,0,0.12)"></div>
<div class="a" style="left:648.98px;top:310.4px;width:9.9px;height:10px;background:#fff000;border-radius:2px;box-shadow:inset 0 0 0 0.7px rgba(0,0,0,0.12)"></div>
<div class="a" style="left:660.1px;top:310.4px;width:9.9px;height:10px;background:#0aa64a;border-radius:2px;box-shadow:inset 0 0 0 0.7px rgba(0,0,0,0.12)"></div>
<div class="a" style="left:671.22px;top:310.4px;width:9.9px;height:10px;background:#0a6ecf;border-radius:2px;box-shadow:inset 0 0 0 0.7px rgba(0,0,0,0.12)"></div>
<div class="a" style="left:682.34px;top:310.4px;width:9.9px;height:10px;background:#6a35a0;border-radius:2px;box-shadow:inset 0 0 0 0.7px rgba(0,0,0,0.12)"></div>
<div class="a" style="left:600.1px;top:329.2px;width:95.3px;height:12.5px;background:#f4f5f7;border-radius:3px"></div>
<div class="t" style="left:603.2px;top:333px;font-size:6.4px;letter-spacing:-0.2px;color:#4a4a4a;font-weight:normal;">Opacity</div>
<div class="a" style="left:603.8px;top:353.7px;width:50px;height:1px;background:#bdbdbd"></div>
<div class="a" style="left:651.5px;top:349.6px;width:7.5px;height:9.2px;background:#fff;border:0.8px solid #777;border-radius:1.5px"></div>
<div class="a" style="left:661.4px;top:349.6px;width:19.8px;height:9.2px;background:#f2f3f5;border-radius:2px"></div>
<div class="c" style="left:471.29999999999995px;width:400px;top:352px;font-size:6.4px;letter-spacing:-0.2px;color:#4a4a4a;font-weight:normal;">100%</div>
<div class="a" style="left:600.1px;top:371.9px;width:95.3px;height:12.900000000000034px;background:#f4f5f7;border-radius:3px"></div>
<div class="t" style="left:603.2px;top:376px;font-size:6.4px;letter-spacing:-0.2px;color:#4a4a4a;font-weight:normal;">More Fill Options</div>
<div class="t" style="left:605.6px;top:393px;font-size:6.4px;letter-spacing:-0.2px;color:#4a4a4a;font-weight:normal;">No Fill</div>
<div class="a" style="left:600px;top:403.1px;width:95.4px;height:14.6px;background:#fdd46d;border:0.6px solid #f3c550;border-radius:3px"></div>
<div class="t" style="left:605.6px;top:408px;font-size:6.4px;letter-spacing:-0.2px;color:#2e2e2e;font-weight:normal;">More Colors</div>
<div class="t" style="left:605.6px;top:423px;font-size:6.4px;letter-spacing:-0.2px;color:#4a4a4a;font-weight:normal;">Gradient</div>
<div class="t" style="left:605.6px;top:438px;font-size:6.4px;letter-spacing:-0.2px;color:#4a4a4a;font-weight:normal;">Textures</div>
<div class="t" style="left:605.6px;top:454px;font-size:6.4px;letter-spacing:-0.2px;color:#4a4a4a;font-weight:normal;">Hatch</div>
<svg style="left:0;top:0" width="970" height="486" viewBox="0 0 970 486" fill="none" stroke="#555" stroke-width="0.8" stroke-linecap="round" stroke-linejoin="round"><rect x="683.1" y="407.85" width="5.9" height="5.5" rx="1.4" fill="#777" stroke="none"/><path d="M685.6 409.0 A1.9 1.9 0 1 0 687.6 410.90000000000003 L685.6 410.90000000000003 Z" fill="#fff" stroke="none"/><rect x="683.1" y="423.0" width="5.9" height="5.5" rx="1.4" fill="#777" stroke="none"/><path d="M685.6 424.15 A1.9 1.9 0 1 0 687.6 426.05 L685.6 426.05 Z" fill="#fff" stroke="none"/><rect x="683.1" y="438.15" width="5.9" height="5.5" rx="1.4" fill="#777" stroke="none"/><path d="M685.6 439.29999999999995 A1.9 1.9 0 1 0 687.6 441.2 L685.6 441.2 Z" fill="#fff" stroke="none"/><rect x="683.1" y="453.35" width="5.9" height="5.5" rx="1.4" fill="#777" stroke="none"/><path d="M685.6 454.5 A1.9 1.9 0 1 0 687.6 456.40000000000003 L685.6 456.40000000000003 Z" fill="#fff" stroke="none"/></svg>
<div class="a" style="left:856px;top:468.4px;width:80px;height:1.6px;background:#ececee;border-radius:1px"></div>
<div class="a" style="left:856px;top:468.4px;width:15px;height:1.6px;background:#c4c4c6;border-radius:1px"></div>
<div class="a" style="left:870.2px;top:464.1px;width:7.6px;height:9.4px;background:#fff;border:0.9px solid #707070;border-radius:1.8px"></div>
<svg style="left:0;top:0" width="970" height="486" viewBox="0 0 970 486" fill="none" stroke="#555" stroke-width="0.8" stroke-linecap="round" stroke-linejoin="round"><path d="M938 463.2 L955.6 463.2 Q957.7 463.2 957.7 465.2 L957.7 473 Q957.7 475 955.6 475 L938 475 L935.2 469.1 Z" fill="#e9eaec" stroke="none"/></svg>
<div class="c" style="left:748px;width:400px;top:467px;font-size:6.4px;letter-spacing:-0.2px;color:#4a4a4a;font-weight:normal;">100%</div></body></html>
